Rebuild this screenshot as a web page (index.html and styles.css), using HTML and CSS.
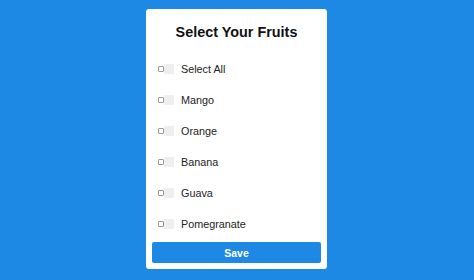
FILE: index.html
```html
<!DOCTYPE html>
<html lang="en">

<head>
    <meta charset="UTF-8">
    <meta name="viewport" content="width=device-width, initial-scale=1.0">
    <title>Select Your Fruits</title>
    <link rel="stylesheet" href="styles.css">
</head>

<body>
    <div class="card">
        <h1>Select Your Fruits</h1>
        <ul class="fruit-list">
            <li><label><input type="checkbox"><span class="box"></span>Select All</label></li>
            <li><label><input type="checkbox"><span class="box"></span>Mango</label></li>
            <li><label><input type="checkbox"><span class="box"></span>Orange</label></li>
            <li><label><input type="checkbox"><span class="box"></span>Banana</label></li>
            <li><label><input type="checkbox"><span class="box"></span>Guava</label></li>
            <li><label><input type="checkbox"><span class="box"></span>Pomegranate</label></li>
        </ul>
        <button class="save">Save</button>
    </div>
</body>

</html>
```

FILE: styles.css
```css
:root {
    --blue: #1e88e5;
}

* {
    padding: 0;
    margin: 0;
    box-sizing: border-box;
}

body {
    display: flex;
    justify-content: center;
    align-items: flex-start;
    height: 100vh;
    padding-top: 9px;
    padding-right: 1px;
    background-color: var(--blue);
    font-family: "Liberation Sans", Arial, sans-serif;
}

.card {
    width: 181px;
    padding: 6px;
    border-radius: 3px;
    background-color: #fff;
}

.card h1 {
    margin-top: 8.5px;
    font-size: 14.4px;
    line-height: 17px;
    text-align: center;
    color: #111;
}

.fruit-list {
    list-style: none;
    margin-top: 13px;
}

.fruit-list li {
    display: flex;
    align-items: center;
    height: 31px;
    padding-left: 6px;
}

.fruit-list label {
    display: flex;
    align-items: center;
    font-size: 10.8px;
    color: #222;
}

/* 小方框复选框 */
.fruit-list input {
    -webkit-appearance: none;
    appearance: none;
    width: 6px;
    height: 6px;
    margin: 0;
    border: 1px solid #9a9a9a;
    border-radius: 1px;
    background-color: #fff;
}

.fruit-list .box {
    width: 10px;
    height: 10px;
    margin-left: 0;
    margin-right: 7px;
    background-color: #efefef;
}

.save {
    display: block;
    width: 100%;
    height: 21px;
    margin-top: 2.5px;
    border: none;
    border-radius: 2px;
    background-color: var(--blue);
    color: #fff;
    font-family: inherit;
    font-size: 10.5px;
    font-weight: bold;
    cursor: pointer;
}
```
